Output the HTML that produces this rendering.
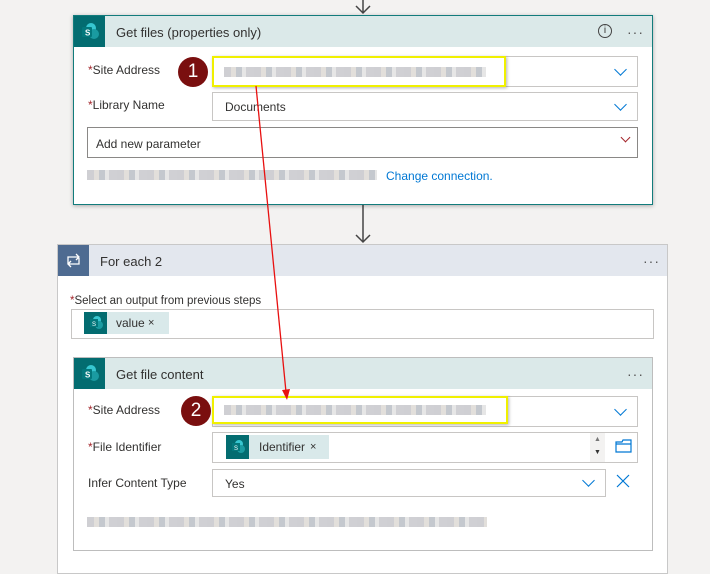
<!DOCTYPE html>
<html><head><style>
*{box-sizing:border-box;margin:0;padding:0}
body{width:710px;height:562px;background:#f3f2f1;font-family:"Liberation Sans",Arial,sans-serif;font-size:12px;color:#323130;position:relative;overflow:hidden}
.a{position:absolute}
.card{position:absolute;background:#fff}
.hdr{position:absolute;left:0;right:0;top:0;height:31px}
.ic{position:absolute;left:0;top:0;width:31px;height:31px}
.lbl{position:absolute;font-size:12px;color:#323130}
.lbl b{color:#a4262c;font-weight:normal}
.inp{position:absolute;border:1px solid #c8c6c4;background:#fff}
.blur{position:absolute;height:10px;background:repeating-linear-gradient(90deg,#cfcfd3 0 7px,#e2dfdb 7px 12px,#c4c8ce 12px 18px,#e6e6e6 18px 22px,#d0d0d4 22px 30px)}
.chev{position:absolute;width:9px;height:9px;border-right:1.5px solid #0078d4;border-bottom:1.5px solid #0078d4;transform:rotate(45deg)}
.yb{position:absolute;border:2px solid #f0f000;box-shadow:1px 1px 3px rgba(0,0,0,.3)}
.badge{position:absolute;width:30px;height:30px;border-radius:50%;background:#7a0f0f;color:#fff;font-size:19px;text-align:center;line-height:30px}
.tok{position:absolute;background:#d9e9ea;height:22px}
.tok .ti{position:absolute;left:0;top:0;width:23px;height:22px;background:#036c70}
.dots{position:absolute;font-size:14px;color:#555;letter-spacing:1px}
</style></head><body>
<svg class="a" style="left:0;top:0" width="710" height="562">
<line x1="363" y1="0" x2="363" y2="13" stroke="#444" stroke-width="1.5"/>
<path d="M356 6 L363 13 L370 6" fill="none" stroke="#444" stroke-width="1.5"/>
<line x1="363" y1="205" x2="363" y2="242" stroke="#444" stroke-width="1.5"/>
<path d="M356 235 L363 242 L370 235" fill="none" stroke="#444" stroke-width="1.5"/>
<line x1="362" y1="550" x2="362" y2="562" stroke="#444" stroke-width="1.5"/>
</svg>

<!-- card 1 -->
<div class="card" style="left:73px;top:15px;width:580px;height:190px;border:1px solid #127c7c;box-shadow:0 1px 4px rgba(0,0,0,.3)">
 <div class="hdr" style="background:#dbe9e9"><div class="ic" style="background:#036c70"><svg width="31" height="31"><circle cx="17" cy="12" r="5" fill="#37c6d0"/><circle cx="20" cy="18" r="5" fill="#1a9ba1"/><rect x="8" y="11" width="10" height="10" rx="1" fill="#03787c"/><text x="11" y="19.5" font-size="8" fill="#fff" font-weight="bold" font-family="Liberation Sans">S</text></svg></div>
 <div class="a" style="left:42px;top:9px;font-size:13px">Get files (properties only)</div>
 <div class="a" style="left:524px;top:8px;width:14px;height:14px;border:1px solid #444;border-radius:50%;font-size:10px;text-align:center;line-height:12px">i</div>
 <div class="dots" style="left:553px;top:8px">···</div></div>
 <div class="lbl" style="left:14px;top:47px"><b>*</b>Site Address</div>
 <div class="inp" style="left:138px;top:40px;width:426px;height:31px"><div class="chev" style="right:12px;top:8px"></div></div>
 <div class="yb" style="left:138px;top:40px;width:294px;height:31px"><div class="blur" style="left:10px;top:9px;width:262px"></div></div>
 <div class="lbl" style="left:14px;top:82px"><b>*</b>Library Name</div>
 <div class="inp" style="left:138px;top:76px;width:426px;height:29px"><div class="a" style="left:12px;top:7px">Documents</div><div class="chev" style="right:12px;top:7px"></div></div>
 <div class="inp" style="left:13px;top:111px;width:551px;height:31px;border-color:#8a8886"><div class="a" style="left:8px;top:9px">Add new parameter</div><div class="a" style="right:8px;top:6px;width:7px;height:7px;border-right:1px solid #a4262c;border-bottom:1px solid #a4262c;transform:rotate(45deg)"></div></div>
 <div class="blur" style="left:13px;top:154px;width:290px"></div>
 <div class="a" style="left:312px;top:153px;color:#0078d4">Change connection.</div>
</div>
<div class="badge" style="left:178px;top:57px">1</div>

<!-- for each -->
<div class="card" style="left:57px;top:244px;width:611px;height:330px;border:1px solid #c8c8c8">
 <div class="hdr" style="background:#e3e7ee"><div class="ic" style="background:#4e6b91"><svg width="31" height="31"><path d="M10 19 V12 H21 M18 9 L21 12 L18 15 M21 13 V19 H10 M13 16 L10 19 L13 22" fill="none" stroke="#fff" stroke-width="1.3"/></svg></div>
 <div class="a" style="left:42px;top:9px;font-size:13px">For each 2</div><div class="dots" style="left:585px;top:8px">···</div></div>
 <div class="lbl" style="left:12px;top:50px;font-size:11.5px"><b>*</b>Select an output from previous steps</div>
 <div class="inp" style="left:13px;top:64px;width:583px;height:30px"><div class="tok" style="left:12px;top:2px;width:85px"><div class="ti"><svg width="23" height="22"><circle cx="13" cy="8" r="4" fill="#37c6d0"/><circle cx="15" cy="13" r="4" fill="#1a9ba1"/><rect x="6" y="7" width="8" height="8" fill="#03787c"/><text x="8" y="14" font-size="6" fill="#fff">S</text></svg></div><div class="a" style="left:32px;top:4px">value</div><div class="a" style="left:64px;top:5px;font-size:11px">×</div></div></div>
</div>

<!-- inner card -->
<div class="card" style="left:73px;top:357px;width:580px;height:194px;border:1px solid #bdbdbd">
 <div class="hdr" style="background:#dbe9e9"><div class="ic" style="background:#036c70"><svg width="31" height="31"><circle cx="17" cy="12" r="5" fill="#37c6d0"/><circle cx="20" cy="18" r="5" fill="#1a9ba1"/><rect x="8" y="11" width="10" height="10" rx="1" fill="#03787c"/><text x="11" y="19.5" font-size="8" fill="#fff" font-weight="bold" font-family="Liberation Sans">S</text></svg></div>
 <div class="a" style="left:42px;top:9px;font-size:13px">Get file content</div><div class="dots" style="left:553px;top:8px">···</div></div>
 <div class="lbl" style="left:14px;top:45px"><b>*</b>Site Address</div>
 <div class="inp" style="left:138px;top:38px;width:426px;height:31px"><div class="chev" style="right:12px;top:8px"></div></div>
 <div class="yb" style="left:138px;top:38px;width:296px;height:28px"><div class="blur" style="left:10px;top:7px;width:262px"></div></div>
 <div class="lbl" style="left:14px;top:82px"><b>*</b>File Identifier</div>
 <div class="inp" style="left:138px;top:74px;width:426px;height:31px"><div class="tok" style="left:13px;top:2px;width:103px;height:24px"><div class="ti" style="height:24px"><svg width="23" height="24"><circle cx="13" cy="9" r="4" fill="#37c6d0"/><circle cx="15" cy="14" r="4" fill="#1a9ba1"/><rect x="6" y="8" width="8" height="8" fill="#03787c"/><text x="8" y="15" font-size="6" fill="#fff">S</text></svg></div><div class="a" style="left:33px;top:5px">Identifier</div><div class="a" style="left:84px;top:6px;font-size:11px">×</div></div>
 <div class="a" style="left:377px;top:0;width:15px;height:29px;background:#f3f2f1;font-size:7px;color:#777;text-align:center;line-height:13px">▲<br><span style="color:#333">▼</span></div></div>
 <svg class="a" style="left:541px;top:80px" width="18" height="16"><path d="M1 4 H7 L8 2 H16 V14 H1 Z M1 6 H16" fill="none" stroke="#0078d4" stroke-width="1.2"/></svg>
 <div class="lbl" style="left:14px;top:118px">Infer Content Type</div>
 <div class="inp" style="left:138px;top:111px;width:394px;height:28px"><div class="a" style="left:12px;top:7px">Yes</div><div class="chev" style="right:12px;top:6px"></div></div>
 <svg class="a" style="left:542px;top:116px" width="14" height="14"><path d="M1 1 L13 13 M13 1 L1 13" stroke="#0078d4" stroke-width="1.2"/></svg>
 <div class="blur" style="left:13px;top:159px;width:400px"></div>
</div>
<div class="badge" style="left:181px;top:396px">2</div>

<svg class="a" style="left:0;top:0" width="710" height="562">
<line x1="256" y1="86" x2="286" y2="392" stroke="#e81010" stroke-width="1.3"/>
<path d="M282 390 L287 400 L290 389 Z" fill="#e81010"/>
</svg>
</body></html>
